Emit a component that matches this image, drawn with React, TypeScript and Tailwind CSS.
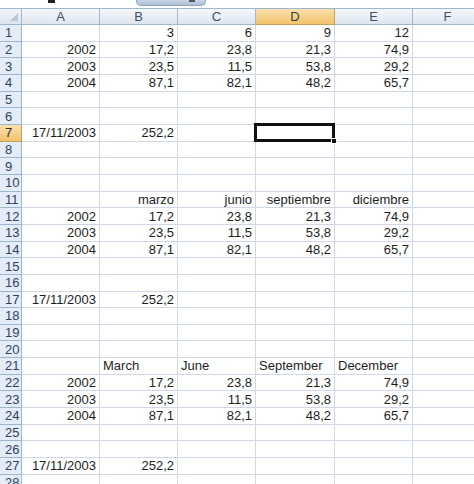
const cols = ['A', 'B', 'C', 'D', 'E', 'F']
const widths = ['w-[78px]', 'w-[78px]', 'w-[78px]', 'w-[79px]', 'w-[78px]', 'w-[70px]']

type Cell = { v: string; left?: boolean }

const rows: Record<number, Cell[]> = {
  1: [{ v: '' }, { v: '3' }, { v: '6' }, { v: '9' }, { v: '12' }],
  2: [{ v: '2002' }, { v: '17,2' }, { v: '23,8' }, { v: '21,3' }, { v: '74,9' }],
  3: [{ v: '2003' }, { v: '23,5' }, { v: '11,5' }, { v: '53,8' }, { v: '29,2' }],
  4: [{ v: '2004' }, { v: '87,1' }, { v: '82,1' }, { v: '48,2' }, { v: '65,7' }],
  7: [{ v: '17/11/2003' }, { v: '252,2' }],
  11: [{ v: '' }, { v: 'marzo' }, { v: 'junio' }, { v: 'septiembre' }, { v: 'diciembre' }],
  12: [{ v: '2002' }, { v: '17,2' }, { v: '23,8' }, { v: '21,3' }, { v: '74,9' }],
  13: [{ v: '2003' }, { v: '23,5' }, { v: '11,5' }, { v: '53,8' }, { v: '29,2' }],
  14: [{ v: '2004' }, { v: '87,1' }, { v: '82,1' }, { v: '48,2' }, { v: '65,7' }],
  17: [{ v: '17/11/2003' }, { v: '252,2' }],
  21: [
    { v: '' },
    { v: 'March', left: true },
    { v: 'June', left: true },
    { v: 'September', left: true },
    { v: 'December', left: true },
  ],
  22: [{ v: '2002' }, { v: '17,2' }, { v: '23,8' }, { v: '21,3' }, { v: '74,9' }],
  23: [{ v: '2003' }, { v: '23,5' }, { v: '11,5' }, { v: '53,8' }, { v: '29,2' }],
  24: [{ v: '2004' }, { v: '87,1' }, { v: '82,1' }, { v: '48,2' }, { v: '65,7' }],
  27: [{ v: '17/11/2003' }, { v: '252,2' }],
}

export default function App() {
  const nums = Array.from({ length: 28 }, (_, i) => i + 1)

  return (
    <div
      className="w-[474px] h-[484px] overflow-hidden bg-white text-[13px] text-[#1e1e1e]"
      style={{ fontFamily: '"Liberation Sans", Arial, sans-serif' }}
    >
      {/* formula bar remnant */}
      <div className="h-[8px] flex bg-white overflow-hidden">
        <div className="ml-[48px] w-[7px] h-[3px] bg-[#222]" />
        <div className="ml-[81px] w-[70px] h-[6px] rounded-b-[5px] bg-gradient-to-b from-[#c9d6e6] to-[#aebfd4] border border-t-0 border-[#8ea5c2] flex justify-end pr-[10px]">
          <div className="w-[6px] h-[2px] bg-[#555]" />
        </div>
      </div>

      {/* column headers */}
      <div className="flex h-[17px] border-t border-[#9eb6ce]">
        <div className="w-[22px] shrink-0 bg-gradient-to-b from-[#f1f5fa] to-[#dce5f0] border-r border-b border-[#9eb6ce] relative">
          <div className="absolute right-[3px] bottom-[3px] w-0 h-0 border-l-[8px] border-l-transparent border-b-[8px] border-b-[#b8c8da]" />
        </div>
        {cols.map((c, i) => (
          <div
            key={c}
            className={`${widths[i]} shrink-0 flex items-center justify-center border-r border-b text-[13px] leading-none ${
              c === 'D'
                ? 'bg-gradient-to-b from-[#fae0ad] to-[#f2c36a] border-[#c2a165] text-[#3b3b3b]'
                : 'bg-gradient-to-b from-[#f5f8fc] to-[#dde5ef] border-[#9eb6ce] text-[#3c4f69]'
            }`}
          >
            {c}
          </div>
        ))}
      </div>

      {/* rows */}
      {nums.map((n) => {
        const data = rows[n] ?? []
        const sel = n === 7
        return (
          <div key={n} className="flex h-[16.67px]">
            <div
              className={`w-[22px] shrink-0 border-r border-b pl-[5px] flex items-center leading-none ${
                sel
                  ? 'bg-gradient-to-b from-[#fae0ad] to-[#f2c36a] border-[#c2a165] text-[#333]'
                  : 'bg-[#e4ecf7] border-[#9eb6ce] text-[#2f4361]'
              }`}
            >
              {n}
            </div>
            {cols.map((c, i) => {
              const cell = data[i]
              const isSel = sel && c === 'D'
              return (
                <div
                  key={c}
                  className={`${widths[i]} shrink-0 border-r border-b border-[#d0d7e5] flex items-center leading-none whitespace-nowrap relative ${
                    cell?.left ? 'justify-start pl-[3px]' : 'justify-end pr-[3px]'
                  } ${isSel ? 'z-10' : ''}`}
                >
                  {cell?.v}
                  {isSel && (
                    <>
                      <div className="absolute -left-[2px] -top-[2px] -right-[1px] -bottom-[1px] border-[3px] border-[#111]" />
                      <div className="absolute -right-[3px] -bottom-[3px] w-[6px] h-[6px] bg-[#111] border border-white" />
                    </>
                  )}
                </div>
              )
            })}
          </div>
        )
      })}
    </div>
  )
}
